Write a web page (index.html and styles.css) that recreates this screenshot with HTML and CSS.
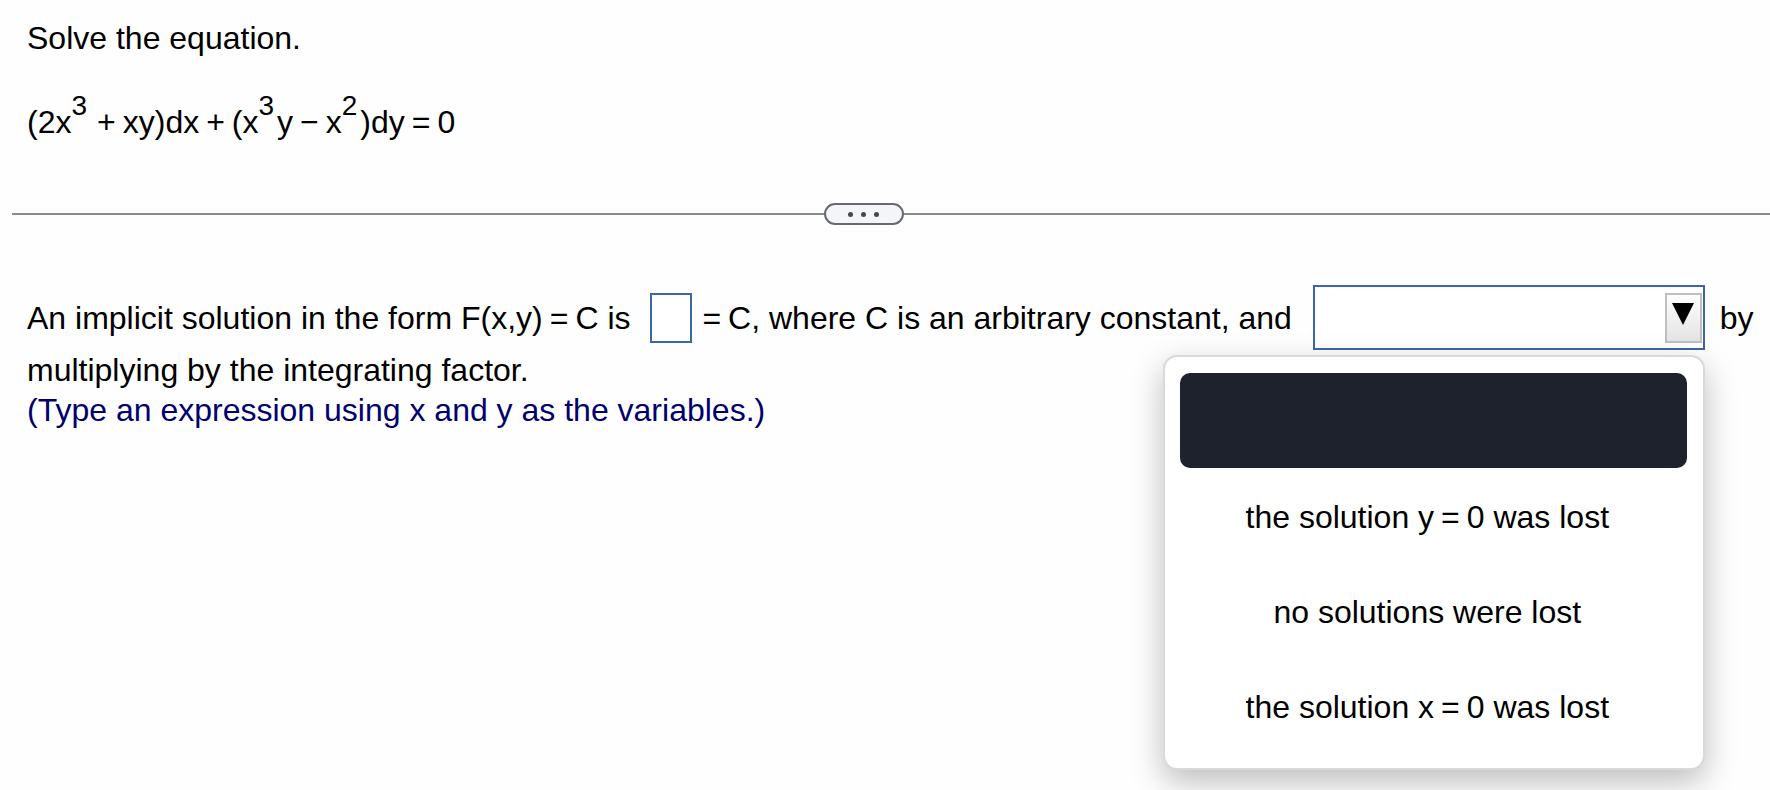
FILE: index.html
```html
<!DOCTYPE html>
<html lang="en">
<head>
<meta charset="utf-8">
<title>Solve the equation</title>
<meta name="viewport" content="width=device-width, initial-scale=1">
<link rel="stylesheet" href="styles.css">
</head>
<body>
<main class="exercise">
  <section class="question">
    <p class="prompt">Solve the equation.</p>
    <p class="equation">(2x<sup class="power">3</sup><span class="op">+</span>xy)dx<span class="op">+</span>(x<sup class="power">3</sup>y<span class="op">−</span>x<sup class="power">2</sup>)dy<span class="op">=</span>0</p>
  </section>

  <div class="divider">
    <span class="rule rule-start"></span>
    <button class="handle" type="button" aria-label="Resize panels">
      <span class="dot"></span><span class="dot"></span><span class="dot"></span>
    </button>
    <span class="rule rule-end"></span>
  </div>

  <section class="answer">
    <p class="statement">An implicit solution in the form F(x,y)<span class="op">=</span>C is <input class="blank" type="text" aria-label="Implicit solution"><span class="op">=</span>C, where C is an arbitrary constant, and <span class="choice"><select class="choice-select" aria-label="Lost solutions">
        <option selected></option>
        <option>the solution y = 0 was lost</option>
        <option>no solutions were lost</option>
        <option>the solution x = 0 was lost</option>
      </select><span class="choice-arrow"><svg width="22" height="22" viewBox="0 0 22 22" aria-hidden="true"><path d="M0 0H22L11 22Z"/></svg></span><span class="menu" role="listbox" aria-label="Lost solutions">
        <button class="menu-item menu-item-active" type="button" role="option" aria-selected="true" aria-label="No choice"></button>
        <button class="menu-item" type="button" role="option">the solution y<span class="op">=</span>0 was lost</button>
        <button class="menu-item" type="button" role="option">no solutions were lost</button>
        <button class="menu-item" type="button" role="option">the solution x<span class="op">=</span>0 was lost</button>
      </span></span> by multiplying by the integrating factor.</p>
    <p class="hint">(Type an expression using x and y as the variables.)</p>
  </section>
</main>
</body>
</html>
```

FILE: styles.css
```css
* {
  box-sizing: border-box;
}

body {
  margin: 0;
  background: #fefefe;
  color: #000;
  font-family: "Liberation Sans", Arial, sans-serif;
  font-size: 32px;
  line-height: 40px;
}

p {
  margin: 0;
}

.exercise {
  display: flex;
  flex-direction: column;
  min-height: 100vh;
  padding-top: 18px;
}

.question {
  display: flex;
  flex-direction: column;
  gap: 44px;
  padding: 0 12px 0 27px;
}

.power {
  margin-right: 3px;
  font-size: 28px;
  line-height: 0;
  vertical-align: 18px;
}

.op {
  margin: 0 7px;
}

.divider {
  display: flex;
  align-items: center;
  margin: 61px 0 60px 12px;
}

.rule {
  height: 2px;
  background: #858a8c;
}

.rule-start {
  flex: 15;
}

.rule-end {
  flex: 16;
}

.handle {
  display: flex;
  align-items: center;
  justify-content: center;
  gap: 8px;
  width: 80px;
  height: 22px;
  padding: 0;
  border: 2px solid #666a70;
  border-radius: 11px;
  background: #f3f5f8;
}

.dot {
  width: 5px;
  height: 5px;
  border-radius: 50%;
  background: #46494c;
}

.answer {
  padding: 0 12px 0 27px;
}

.blank {
  width: 42px;
  height: 50px;
  margin: 0 3px 0 11px;
  padding: 0 4px;
  border: 2px solid #3b66a8;
  border-radius: 0;
  background: #fff;
  font: inherit;
}

.choice {
  display: inline-block;
  position: relative;
  margin: 0 6px 0 12px;
}

.choice-select {
  width: 392px;
  height: 65px;
  padding: 0 44px 0 8px;
  border: 2px solid #3b66a8;
  border-radius: 0;
  background: #fff;
  appearance: none;
  color: #000;
  font: inherit;
}

.choice-arrow {
  display: flex;
  position: absolute;
  top: 8px;
  right: 3px;
  align-items: flex-start;
  justify-content: center;
  width: 37px;
  height: 50px;
  padding-top: 8px;
  border: 2px solid #bfbfbf;
  background: linear-gradient(#fdfdfd, #e4e4e4);
  pointer-events: none;
}

.menu {
  display: flex;
  position: absolute;
  top: 70px;
  right: 0;
  flex-direction: column;
  width: 542px;
  padding: 16px 16px 15px 15px;
  border: 2px solid #d9d9d9;
  border-radius: 14px;
  background: #fff;
  box-shadow: 0 12px 32px rgba(0, 0, 0, 0.26);
}

.menu-item {
  height: 95px;
  padding: 3px 12px 0 0;
  border: 0;
  border-radius: 10px;
  background: transparent;
  color: #000;
  font: inherit;
  text-align: center;
}

.menu-item-active {
  background: #1e222d;
}

.hint {
  color: #00006e;
}
```
